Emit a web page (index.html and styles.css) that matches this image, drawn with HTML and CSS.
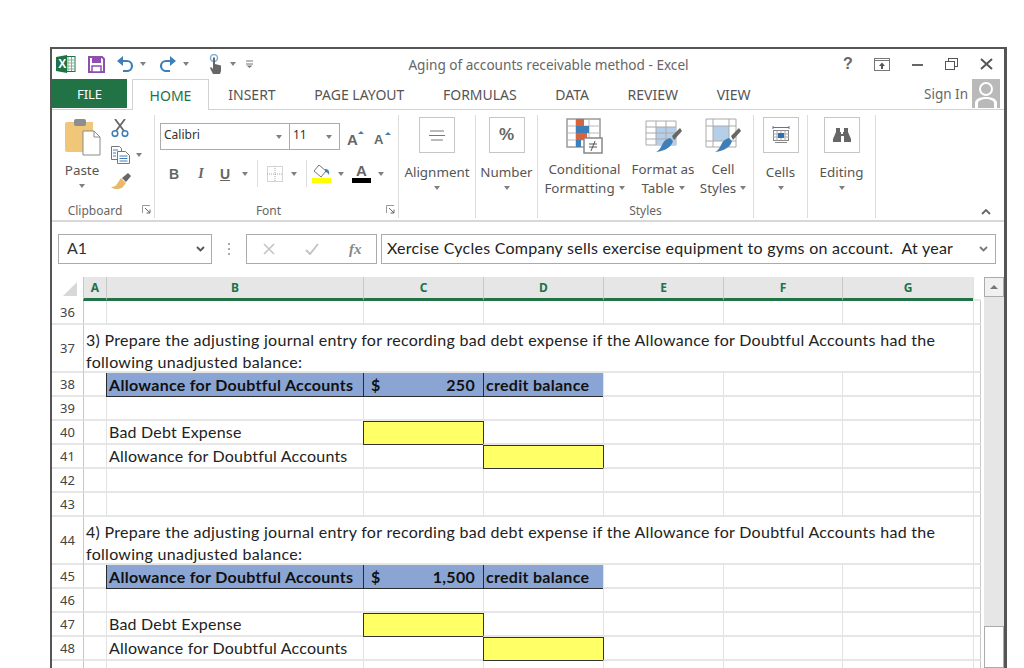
FILE: index.html
```html
<!DOCTYPE html>
<html lang="en">
<head>
    <meta charset="UTF-8">
    <title>Aging of accounts receivable method - Excel</title>
    <link rel="stylesheet" href="styles.css">
</head>
<body>
<div class="window">

    <!-- title bar -->
    <div class="titlebar">
        <div class="qat">
            <svg class="ic-excel" width="20" height="18" viewBox="0 0 20 18">
                <rect x="7" y="1.500" width="12" height="15" fill="#fff" stroke="#1f7246"/>
                <path d="M12 2v14M15.500 2v14M8 5h11M8 8h11M8 11h11M8 14h11" stroke="#7fb594" stroke-width="1" fill="none"/>
                <path d="M0 2 11 0v18L0 16z" fill="#1f7246"/>
                <text x="2.200" y="13" class="ic-x">X</text>
            </svg>
            <svg class="ic-save" width="17" height="17" viewBox="0 0 17 17">
                <path d="M1 1h13l2 2v13H1z" fill="#fff" stroke="#8e4fb0" stroke-width="2"/>
                <rect x="4" y="1" width="9" height="6" fill="#8e4fb0"/>
                <rect x="4" y="10" width="9" height="6" fill="#fff" stroke="#8e4fb0" stroke-width="1.500"/>
            </svg>
            <svg class="ic-undo" width="18" height="16" viewBox="0 0 18 16">
                <path d="M3 5h8a5 5 0 0 1 0 10H7" fill="none" stroke="#3f7fb8" stroke-width="2.200"/>
                <path d="M7 0v10L1 5z" fill="#3f7fb8"/>
            </svg>
            <span class="caret caret-qat"></span>
            <svg class="ic-redo" width="18" height="16" viewBox="0 0 18 16">
                <path d="M15 5H7a5 5 0 0 0 0 10h4" fill="none" stroke="#3f7fb8" stroke-width="2.200"/>
                <path d="M11 0v10l6-5z" fill="#3f7fb8"/>
            </svg>
            <span class="caret caret-qat"></span>
            <svg class="ic-touch" width="16" height="20" viewBox="0 0 16 20">
                <circle cx="6" cy="4" r="3.500" fill="none" stroke="#7fb0d8" stroke-width="1.500"/>
                <path d="M5 3.500h2V10l6 1.500V17l-1 3H5l-3-6 1-1 2 2z" fill="#666"/>
            </svg>
            <span class="caret caret-qat"></span>
            <svg class="ic-more" width="7" height="8" viewBox="0 0 7 8">
                <path d="M0 1h7M0 4h7" stroke="#777" stroke-width="1"/>
                <path d="M0.500 5.500h6L3.500 8z" fill="#777"/>
            </svg>
        </div>
        <div class="doc-title">Aging of accounts receivable method - Excel</div>
        <div class="win-controls">
            <span class="ctl-help">?</span>
            <svg width="16" height="13" viewBox="0 0 16 13">
                <rect x="0.500" y="0.500" width="15" height="12" fill="none" stroke="#777"/>
                <path d="M1 2.500h14" stroke="#777"/>
                <path d="M8 4.500 11 8H9v3H7V8H5z" fill="#555"/>
            </svg>
            <svg width="11" height="3" viewBox="0 0 11 3"><rect width="11" height="2" y="1" fill="#666"/></svg>
            <svg width="13" height="12" viewBox="0 0 13 12">
                <rect x="3.500" y="0.500" width="9" height="8" fill="none" stroke="#555"/>
                <rect x="0.500" y="3.500" width="9" height="8" fill="#fff" stroke="#555"/>
            </svg>
            <svg width="13" height="12" viewBox="0 0 13 12"><path d="M1 1l11 10M12 1 1 11" stroke="#555" stroke-width="2"/></svg>
        </div>
    </div>

    <!-- tabs -->
    <div class="tabs">
        <div class="tab tab-file">FILE</div>
        <div class="tab tab-active">HOME</div>
        <div class="tab">INSERT</div>
        <div class="tab">PAGE LAYOUT</div>
        <div class="tab">FORMULAS</div>
        <div class="tab">DATA</div>
        <div class="tab">REVIEW</div>
        <div class="tab">VIEW</div>
        <div class="sign-in">Sign In</div>
        <svg class="avatar" width="28" height="29" viewBox="0 0 28 29">
            <rect width="28" height="29" fill="#b9b9b9"/>
            <circle cx="14" cy="10" r="7" fill="#fff"/>
            <path d="M3 29v-5c0-4 5-6 11-6s11 2 11 6v5z" fill="#fff"/>
            <circle cx="14" cy="10" r="5" fill="#b9b9b9"/>
            <path d="M6 29v-5c0-2 4-4 8-4s8 2 8 4v5z" fill="#b9b9b9"/>
        </svg>
    </div>

    <!-- ribbon -->
    <div class="ribbon">
        <div class="group g-clipboard">
            <div class="group-body clip-body">
                <div class="paste">
                    <svg width="36" height="38" viewBox="0 0 36 38">
                        <path d="M2 4h26v30H2a2 2 0 0 1-2-2V6a2 2 0 0 1 2-2z" fill="#f0c678"/>
                        <rect x="9" y="1" width="12" height="7" rx="2" fill="#8d8d8d"/>
                        <path d="M18 13h11l6 6v18H18z" fill="#fff" stroke="#8a8a8a"/>
                        <path d="M29 13v6h6" fill="none" stroke="#8a8a8a"/>
                    </svg>
                    <span class="ribbon-text paste-label">Paste</span>
                    <span class="caret"></span>
                </div>
                <div class="clip-tools">
                    <svg width="18" height="18" viewBox="0 0 18 18">
                        <path d="M4 0l9 12M14 0 5 12" stroke="#666" stroke-width="1.800" fill="none"/>
                        <circle cx="4" cy="14.500" r="2.800" fill="none" stroke="#3f7fb8" stroke-width="1.500"/>
                        <circle cx="14" cy="14.500" r="2.800" fill="none" stroke="#3f7fb8" stroke-width="1.500"/>
                    </svg>
                    <div class="copy-row">
                        <svg width="19" height="18" viewBox="0 0 19 18">
                            <path d="M0.500 0.500h8l2 2v11h-10z" fill="#fff" stroke="#777"/>
                            <path d="M6.500 5.500h8l4 4v8h-12z" fill="#fff" stroke="#777"/>
                            <path d="M2 4h5M2 7h3M2 10h3" stroke="#3f7fb8"/>
                            <path d="M8.500 10h8M8.500 12.500h8M8.500 15h8" stroke="#3f7fb8"/>
                        </svg>
                        <span class="caret"></span>
                    </div>
                    <svg width="20" height="17" viewBox="0 0 20 17">
                        <path d="M10 5l5 5-4 5c-3 1-8 2-11-1 3 0 5-1 6-3z" fill="#e8b968"/>
                        <path d="M11 5l6-5 3 3-5 6z" fill="#666"/>
                    </svg>
                </div>
            </div>
            <div class="group-label has-launcher">
                <span>Clipboard</span>
                <svg class="launcher" width="9" height="9" viewBox="0 0 9 9">
                    <path d="M0.500 8V0.500H8" fill="none" stroke="#999"/>
                    <path d="M3 3l5 5M8 4.500V8H4.500" fill="none" stroke="#666"/>
                </svg>
            </div>
        </div>

        <div class="group g-font">
            <div class="group-body font-body">
                <div class="font-row">
                    <div class="combo combo-name">Calibri<span class="caret"></span></div>
                    <div class="combo combo-size">11<span class="caret"></span></div>
                    <div class="grow-btn">A<i class="tick"></i></div>
                    <div class="grow-btn shrink">A<i class="tick"></i></div>
                </div>
                <div class="font-row2">
                    <b class="fmt">B</b>
                    <i class="fmt fmt-i">I</i>
                    <u class="fmt">U</u>
                    <span class="caret"></span>
                    <span class="sep"></span>
                    <svg width="16" height="16" viewBox="0 0 16 16">
                        <path d="M0.500 0.500h15v15H0.500zM8 0v16M0 8h16" fill="none" stroke="#aaa" stroke-dasharray="1 1"/>
                    </svg>
                    <span class="caret"></span>
                    <span class="sep"></span>
                    <div class="color-btn">
                        <svg width="19" height="13" viewBox="0 0 19 13">
                            <path d="M7 0l7 6-5 6-7-6z" fill="#fff" stroke="#777"/>
                            <path d="M13 4c3 0 5 2 4 6-1-2-2-3-4-3z" fill="#3f7fb8"/>
                        </svg>
                        <span class="color-bar bar-yellow"></span>
                    </div>
                    <span class="caret"></span>
                    <div class="color-btn color-a">
                        <span class="color-a-text">A</span>
                        <span class="color-bar bar-black"></span>
                    </div>
                    <span class="caret"></span>
                </div>
            </div>
            <div class="group-label has-launcher">
                <span>Font</span>
                <svg class="launcher" width="9" height="9" viewBox="0 0 9 9">
                    <path d="M0.500 8V0.500H8" fill="none" stroke="#999"/>
                    <path d="M3 3l5 5M8 4.500V8H4.500" fill="none" stroke="#666"/>
                </svg>
            </div>
        </div>

        <div class="group g-align">
            <div class="group-body collapsed">
                <div class="box">
                    <svg width="16" height="11" viewBox="0 0 16 11"><path d="M1 1h14M0 5.500h16M2 10h12" stroke="#777"/></svg>
                </div>
                <span class="ribbon-text">Alignment</span>
                <span class="caret"></span>
            </div>
            <div class="group-label"></div>
        </div>

        <div class="group g-number">
            <div class="group-body collapsed">
                <div class="box box-pct">%</div>
                <span class="ribbon-text">Number</span>
                <span class="caret"></span>
            </div>
            <div class="group-label"></div>
        </div>

        <div class="group g-styles">
            <div class="group-body styles-body">
                <div class="style-item si-cond">
                    <svg width="37" height="37" viewBox="0 0 37 37">
                        <path d="M1 1h33v28H1z" fill="#fff" stroke="#999" stroke-width="1.500"/>
                        <path d="M10 1v28M23 1v28M1 8h33M1 15h33M1 22h33" stroke="#bbb"/>
                        <rect x="10" y="1" width="8" height="7" fill="#d9633a"/>
                        <rect x="10" y="8" width="13" height="7" fill="#3f7fb8"/>
                        <rect x="10" y="15" width="11" height="7" fill="#d9633a"/>
                        <rect x="10" y="22" width="5" height="7" fill="#3f7fb8"/>
                        <rect x="18" y="20" width="18" height="15" fill="#fff" stroke="#888" stroke-width="1.500"/>
                        <path d="M23 26h8M23 29h8M29 23l-4 10" stroke="#555"/>
                    </svg>
                    <div class="ribbon-text two-line">Conditional<br>Formatting<span class="caret caret-inline"></span></div>
                </div>
                <div class="style-item si-format">
                    <svg width="37" height="37" viewBox="0 0 37 37">
                        <path d="M1 3h30v24H1z" fill="#fff" stroke="#aaa"/>
                        <rect x="11" y="9" width="20" height="18" fill="#b6cfe8"/>
                        <path d="M1 9h30M1 15h30M1 21h30M11 3v24M21 3v24" stroke="#aaa"/>
                        <path d="M27 18l8-8 2 3-8 9z" fill="#666"/>
                        <path d="M25 20l3 3c-1 5-7 10-17 11 4-2 5-5 7-9 2-3 4-4 7-5z" fill="#3f7fb8"/>
                    </svg>
                    <div class="ribbon-text two-line">Format as<br>Table<span class="caret caret-inline"></span></div>
                </div>
                <div class="style-item si-cell">
                    <svg width="37" height="37" viewBox="0 0 37 37">
                        <path d="M1 1h30v28H1z" fill="#fff" stroke="#aaa"/>
                        <rect x="8" y="8" width="16" height="15" fill="#b6cfe8"/>
                        <path d="M1 8h30M1 23h30M8 1v28M24 1v28" stroke="#aaa"/>
                        <path d="M26 18l8-8 2 3-8 9z" fill="#666"/>
                        <path d="M24 20l3 3c-1 5-7 10-17 11 4-2 5-5 7-9 2-3 4-4 7-5z" fill="#3f7fb8"/>
                    </svg>
                    <div class="ribbon-text two-line">Cell<br>Styles<span class="caret caret-inline"></span></div>
                </div>
            </div>
            <div class="group-label">Styles</div>
        </div>

        <div class="group g-cells">
            <div class="group-body collapsed">
                <div class="box">
                    <svg width="18" height="18" viewBox="0 0 18 18">
                        <path d="M1 1.500h16M1 0v3M17 0v3" stroke="#3f7fb8"/>
                        <rect x="1.500" y="4.500" width="15" height="10" fill="#fff" stroke="#888"/>
                        <path d="M1.500 8h15M1.500 11h15M5 4.500v10M9 4.500v10M13 4.500v10" stroke="#aaa"/>
                        <rect x="6" y="7" width="6" height="5" fill="#2f6fb0"/>
                        <path d="M3 16.500h12" stroke="#888"/>
                    </svg>
                </div>
                <span class="ribbon-text">Cells</span>
                <span class="caret"></span>
            </div>
            <div class="group-label"></div>
        </div>

        <div class="group g-edit">
            <div class="group-body collapsed">
                <div class="box">
                    <svg width="18" height="16" viewBox="0 0 18 16">
                        <path d="M3 1h4v4h1v2h2V5h1V1h4v4l3 7v3h-7V9H8v6H0v-3l3-7z" fill="#666"/>
                    </svg>
                </div>
                <span class="ribbon-text">Editing</span>
                <span class="caret"></span>
            </div>
            <div class="group-label"></div>
        </div>

        <div class="ribbon-end">
            <svg width="10" height="6" viewBox="0 0 10 6"><path d="M1 5l4-4 4 4" fill="none" stroke="#666" stroke-width="1.800"/></svg>
        </div>
    </div>

    <!-- formula bar -->
    <div class="formula-bar">
        <div class="name-box"><span>A1</span>
            <svg width="9" height="6" viewBox="0 0 9 6"><path d="M1 1l3.500 3.500L8 1" fill="none" stroke="#555" stroke-width="1.800"/></svg>
        </div>
        <div class="fx-dots"><i></i><i></i><i></i></div>
        <div class="fx-buttons">
            <svg width="12" height="12" viewBox="0 0 12 12"><path d="M1 1l10 10M11 1 1 11" stroke="#c4c4c4" stroke-width="1.600"/></svg>
            <svg width="14" height="12" viewBox="0 0 14 12"><path d="M1 7l4 4 8-10" fill="none" stroke="#c4c4c4" stroke-width="2"/></svg>
            <span class="fx-label">fx</span>
        </div>
        <div class="fx-input">
            <span>Xercise Cycles Company sells exercise equipment to gyms on account.&nbsp; At year</span>
            <svg width="9" height="6" viewBox="0 0 9 6"><path d="M1 1l3.500 3.500L8 1" fill="none" stroke="#777" stroke-width="1.800"/></svg>
        </div>
    </div>

    <!-- sheet -->
    <div class="sheet">
        <table class="grid">
            <colgroup>
                <col class="c-row"><col class="c-a"><col class="c-b"><col class="c-c"><col class="c-d"><col class="c-e"><col class="c-f"><col class="c-g"><col class="c-h">
            </colgroup>
            <tr class="head">
                <th class="corner"><span class="corner-tri"></span></th>
                <th>A</th><th>B</th><th>C</th><th>D</th><th>E</th><th>F</th><th>G</th><th class="head-end"></th>
            </tr>
            <tr><td class="rn">36</td><td></td><td></td><td></td><td></td><td></td><td></td><td></td><td></td></tr>
            <tr class="tall">
                <td class="rn">37</td>
                <td colspan="7" class="note">3) Prepare the adjusting journal entry for recording bad debt expense if the Allowance for Doubtful Accounts had the following unadjusted balance:</td>
                <td></td>
            </tr>
            <tr>
                <td class="rn">38</td><td></td>
                <td class="blue">Allowance for Doubtful Accounts</td>
                <td class="blue amount"><span>$</span><span>250</span></td>
                <td class="blue">credit balance</td>
                <td></td><td></td><td></td><td></td>
            </tr>
            <tr><td class="rn">39</td><td></td><td></td><td></td><td></td><td></td><td></td><td></td><td></td></tr>
            <tr><td class="rn">40</td><td></td><td class="label">Bad Debt Expense</td><td class="input"></td><td></td><td></td><td></td><td></td><td></td></tr>
            <tr><td class="rn">41</td><td></td><td class="label">Allowance for Doubtful Accounts</td><td></td><td class="input"></td><td></td><td></td><td></td><td></td></tr>
            <tr><td class="rn">42</td><td></td><td></td><td></td><td></td><td></td><td></td><td></td><td></td></tr>
            <tr><td class="rn">43</td><td></td><td></td><td></td><td></td><td></td><td></td><td></td><td></td></tr>
            <tr class="tall">
                <td class="rn">44</td>
                <td colspan="7" class="note">4) Prepare the adjusting journal entry for recording bad debt expense if the Allowance for Doubtful Accounts had the following unadjusted balance:</td>
                <td></td>
            </tr>
            <tr>
                <td class="rn">45</td><td></td>
                <td class="blue">Allowance for Doubtful Accounts</td>
                <td class="blue amount"><span>$</span><span>1,500</span></td>
                <td class="blue">credit balance</td>
                <td></td><td></td><td></td><td></td>
            </tr>
            <tr><td class="rn">46</td><td></td><td></td><td></td><td></td><td></td><td></td><td></td><td></td></tr>
            <tr><td class="rn">47</td><td></td><td class="label">Bad Debt Expense</td><td class="input"></td><td></td><td></td><td></td><td></td><td></td></tr>
            <tr><td class="rn">48</td><td></td><td class="label">Allowance for Doubtful Accounts</td><td></td><td class="input"></td><td></td><td></td><td></td><td></td></tr>
            <tr><td class="rn">49</td><td></td><td></td><td></td><td></td><td></td><td></td><td></td><td></td></tr>
        </table>
        <div class="scrollbar">
            <div class="sb-up"><span class="sb-arrow"></span></div>
            <div class="sb-track"></div>
            <div class="sb-thumb"></div>
        </div>
    </div>

</div>
</body>
</html>
```

FILE: styles.css
```css
body {
    margin: 0;
    height: 668px;
    overflow: hidden;
    background: #fff;
    font-family: "Noto Sans", "Open Sans", sans-serif;
    color: #444;
}
.window {
    box-sizing: border-box;
    margin: 47px 17px 0 50px;
    height: 621px;
    border-top: 2px solid #555;
    border-left: 2px solid #555;
    border-right: 3px solid #555;
    overflow: hidden;
}

/* title bar */
.titlebar {
    display: flex;
    align-items: center;
    height: 30px;
}
.qat {
    display: flex;
    align-items: center;
    width: 210px;
    padding-left: 4px;
    box-sizing: border-box;
}
.ic-x {
    font: bold 12px "Liberation Sans", sans-serif;
    fill: #fff;
}
.ic-save { margin-left: 12px; }
.ic-undo { margin-left: 11px; }
.ic-redo { margin-left: 13px; }
.ic-touch { margin-left: 19px; }
.ic-more { margin-left: 10px; }
.caret-qat { margin-left: 6px; }
.doc-title {
    flex: 1;
    text-align: center;
    font-size: 13.600px;
    color: #666;
}
.win-controls {
    display: flex;
    align-items: center;
    width: 169px;
    gap: 22px;
    box-sizing: border-box;
    padding-left: 8px;
}
.ctl-help {
    font: bold 16px "Liberation Sans", sans-serif;
    color: #666;
    width: 9px;
}

/* tabs */
.tabs {
    display: flex;
    height: 31px;
    box-sizing: border-box;
    border-bottom: 1px solid #d2d2d2;
}
.tab {
    padding: 0 19.300px;
    font-size: 14px;
    line-height: 31px;
    color: #555;
}
.tab-file {
    width: 75px;
    height: 29px;
    padding: 0;
    box-sizing: border-box;
    margin-right: 5px;
    background: #217346;
    color: #fff;
    text-align: center;
    font-size: 13px;
}
.tab-active {
    width: 77px;
    height: 31px;
    padding: 0;
    box-sizing: border-box;
    border: 1px solid #d2d2d2;
    border-bottom: none;
    background: #fff;
    color: #217346;
    text-align: center;
}
.sign-in {
    margin-left: auto;
    font-size: 13.500px;
    line-height: 30px;
    color: #666;
    margin-right: 4px;
}
.avatar { margin-right: 4px; }

/* ribbon */
.ribbon {
    display: flex;
    height: 112px;
    box-sizing: border-box;
    padding-top: 5px;
    border-bottom: 2px solid #d8d8d8;
}
.group {
    display: flex;
    flex-direction: column;
    box-sizing: border-box;
    height: 103px;
    border-right: 1px solid #dcdcdc;
}
.g-clipboard { width: 103px; }
.g-font { width: 244px; }
.g-align { width: 77px; }
.g-number { width: 62px; }
.g-styles { width: 216px; }
.g-cells { width: 54px; }
.g-edit { width: 68px; }
.group-body {
    flex: 1;
    min-height: 0;
}
.group-label {
    height: 17px;
    line-height: 20px;
    font-size: 12px;
    color: #666;
    text-align: center;
}
.has-launcher {
    display: flex;
    justify-content: center;
    position: relative;
    padding-right: 16px;
}
.launcher {
    position: absolute;
    right: 3px;
    top: 4px;
}
.ribbon-text {
    font-size: 13.400px;
    color: #555;
}
.caret {
    display: inline-block;
    width: 0;
    height: 0;
    border-left: 3.500px solid transparent;
    border-right: 3.500px solid transparent;
    border-top: 4px solid #808080;
}
.caret-inline {
    margin-left: 4px;
    vertical-align: 3px;
}

/* clipboard */
.clip-body {
    display: flex;
}
.paste {
    width: 58px;
    margin-left: 1px;
    display: flex;
    flex-direction: column;
    align-items: center;
    padding-top: 3px;
    box-sizing: border-box;
}
.paste svg { margin-left: 1px; }
.paste-label {
    margin-top: 6px;
    line-height: 17px;
}
.paste .caret { margin-top: 5px; }
.clip-tools {
    display: flex;
    flex-direction: column;
    align-items: flex-start;
    padding-top: 4px;
    gap: 9px;
}
.copy-row {
    display: flex;
    align-items: center;
    gap: 6px;
}

/* font group */
.font-body {
    padding: 8px 0 0 5px;
}
.font-row {
    display: flex;
    align-items: center;
}
.combo {
    display: flex;
    align-items: center;
    justify-content: space-between;
    box-sizing: border-box;
    height: 27px;
    padding: 0 7px 4px 3px;
    border: 1px solid #ababab;
    font-size: 12px;
    color: #333;
}
.combo .caret { margin-top: 4px; }
.combo-name { width: 130px; }
.combo-size {
    width: 51px;
    margin-left: -1px;
}
.grow-btn {
    position: relative;
    margin: 5px 0 0 7px;
    width: 14px;
    font: bold 15px "Liberation Sans", sans-serif;
    color: #666;
}
.shrink {
    margin-left: 13px;
    font-size: 13px;
}
.tick {
    position: absolute;
    top: 0;
    right: -3px;
    border-left: 3px solid transparent;
    border-right: 3px solid transparent;
    border-bottom: 3px solid #3f7fb8;
}
.font-row2 {
    display: flex;
    align-items: center;
    margin: 10px 0 0 7px;
    height: 27px;
}
.fmt {
    width: 14px;
    margin-right: 13px;
    text-align: center;
    font: bold 14px "Liberation Sans", sans-serif;
    color: #666;
}
.fmt-i {
    margin-right: 10px;
    font-family: "Liberation Serif", serif;
    font-style: italic;
}
.fmt + .caret { margin-left: -3px; }
.sep {
    width: 1px;
    height: 27px;
    margin: 0 9px;
    background: #dcdcdc;
}
.font-row2 svg + .caret { margin-left: 8px; }
.font-row2 .sep + .color-btn { margin-left: -4px; }
.color-btn {
    display: flex;
    flex-direction: column;
    align-items: center;
    margin-right: 7px;
}
.color-a {
    margin-left: 8px;
}
.color-a-text {
    font: bold 15px/14px "Liberation Sans", sans-serif;
    color: #666;
}
.color-bar {
    width: 19px;
    height: 5px;
}
.bar-yellow { background: #ffff00; }
.bar-black { background: #000; }

/* collapsed groups */
.collapsed {
    display: flex;
    flex-direction: column;
    align-items: center;
}
.box {
    display: flex;
    align-items: center;
    justify-content: center;
    box-sizing: border-box;
    width: 36px;
    height: 36px;
    margin-top: 2px;
    margin-bottom: 10px;
    border: 1px solid #c6c6c6;
}
.box-pct {
    font: bold 17px "Liberation Sans", sans-serif;
    color: #666;
}
.collapsed .ribbon-text { line-height: 18px; }
.collapsed .caret { margin-top: 5px; }

/* styles group */
.styles-body {
    display: flex;
    padding-top: 3px;
}
.style-item {
    display: flex;
    flex-direction: column;
    align-items: center;
}
.si-cond { width: 93px; }
.si-format { width: 64px; }
.si-cell { width: 56px; }
.two-line {
    margin-top: 5px;
    line-height: 19px;
    text-align: center;
    white-space: nowrap;
}
.ribbon-end {
    flex: 1;
    display: flex;
    justify-content: flex-end;
    align-items: flex-end;
    padding: 0 13px 5px 0;
}

/* formula bar */
.formula-bar {
    display: flex;
    align-items: stretch;
    height: 30px;
    margin: 12px 8px 13px 6px;
}
.name-box {
    display: flex;
    align-items: center;
    justify-content: space-between;
    box-sizing: border-box;
    width: 154px;
    padding: 0 6px 0 8px;
    border: 1px solid #ababab;
    font-family: Lato, sans-serif;
    font-size: 16px;
    color: #333;
}
.name-box span { padding-bottom: 3px; }
.fx-dots {
    display: flex;
    flex-direction: column;
    justify-content: center;
    align-items: center;
    gap: 3px;
    width: 34px;
}
.fx-dots i {
    width: 2px;
    height: 2px;
    background: #aaa;
}
.fx-buttons {
    display: flex;
    align-items: center;
    gap: 30px;
    box-sizing: border-box;
    width: 131px;
    padding-left: 16px;
    border: 1px solid #ababab;
}
.fx-label {
    font: italic bold 15px "Liberation Serif", serif;
    color: #888;
    margin-left: 0;
}
.fx-input {
    display: flex;
    align-items: center;
    justify-content: space-between;
    box-sizing: border-box;
    flex: 1;
    margin-left: 4px;
    padding: 0 7px 0 5px;
    border: 1px solid #ababab;
    font-family: Lato, sans-serif;
    font-size: 16px;
    letter-spacing: 0.250px;
    color: #222;
}
.fx-input span { padding-bottom: 3px; }

/* sheet */
.sheet {
    display: flex;
    gap: 3px;
    align-items: flex-start;
}
.grid {
    width: 929px;
    table-layout: fixed;
    border-collapse: separate;
    border-spacing: 0;
    font-family: Lato, sans-serif;
    font-size: 16px;
    letter-spacing: 0.200px;
    color: #222;
}
.c-row { width: 31px; }
.c-a { width: 23px; }
.c-b { width: 257px; }
.c-c { width: 120px; }
.c-d { width: 120px; }
.c-e { width: 120px; }
.c-f { width: 119px; }
.c-g { width: 131px; }
.c-h { width: 8px; }
.grid tr { height: 24px; }
.grid tr.tall { height: 48px; }
.grid td {
    box-sizing: border-box;
    padding: 0 3px 1px 2px;
    border-left: 1px solid #e2e2e2;
    border-bottom: 2px solid #e6e6e6;
    white-space: nowrap;
    overflow: hidden;
}
.grid td:last-child { border-right: 1px solid #c8c8c8; }
.head th {
    box-sizing: border-box;
    padding: 0;
    height: 24px;
    background: #e6e6e6;
    border-left: 1px solid #c8c8c8;
    border-bottom: 3px solid #217346;
    font-family: "Noto Sans", sans-serif;
    font-size: 12px;
    font-weight: bold;
    letter-spacing: 0;
    color: #217346;
}
.head .corner {
    background: #fff;
    border-bottom: none;
    border-left: none;
}
.head .head-end {
    background: #fff;
    border-left: 1px solid #e2e2e2;
    border-bottom: 2px solid #e6e6e6;
}
.corner-tri {
    display: block;
    width: 0;
    height: 0;
    margin-left: 11px;
    border-left: 14px solid transparent;
    border-bottom: 14px solid #d8d8d8;
}
.grid .rn {
    padding: 0;
    border-left: none;
    text-align: center;
    font-family: "Noto Sans", sans-serif;
    font-size: 13px;
    letter-spacing: 0;
    color: #444;
}
.grid .rn + td { border-left-color: #c8c8c8; }
.grid .note {
    white-space: normal;
    letter-spacing: 0.290px;
    line-height: 22px;
    padding-top: 4px;
    padding-bottom: 0;
    border-bottom: none;
    box-shadow: inset 0 -2px 0 #e6e6e6;
}
.grid .blue {
    background: #8aa5d3;
    font-weight: bold;
    letter-spacing: 0.280px;
    color: #111;
    border-left: 1px solid #2a2a2a;
    border-bottom: 1px solid #2a2a2a;
}
.amount span { float: left; margin-left: 5px; }
.amount span + span { float: right; margin: 0 5px 0 0; }
.grid .input {
    background: #ffff66;
    border: 1px solid #333;
    border-right: none;
}
.grid .input + td { border-left-color: #333; }

/* scrollbar */
.scrollbar {
    display: flex;
    flex-direction: column;
    width: 20px;
    height: 391px;
    background: #e6e6e6;
}
.sb-up {
    display: flex;
    align-items: center;
    justify-content: center;
    box-sizing: border-box;
    height: 20px;
    background: #f0f0f0;
    border: 1px solid #ababab;
}
.sb-arrow {
    border-left: 4px solid transparent;
    border-right: 4px solid transparent;
    border-bottom: 4px solid #777;
}
.sb-track { height: 329px; }
.sb-thumb {
    flex: 1;
    background: #fff;
    border: 1px solid #ababab;
}
```
